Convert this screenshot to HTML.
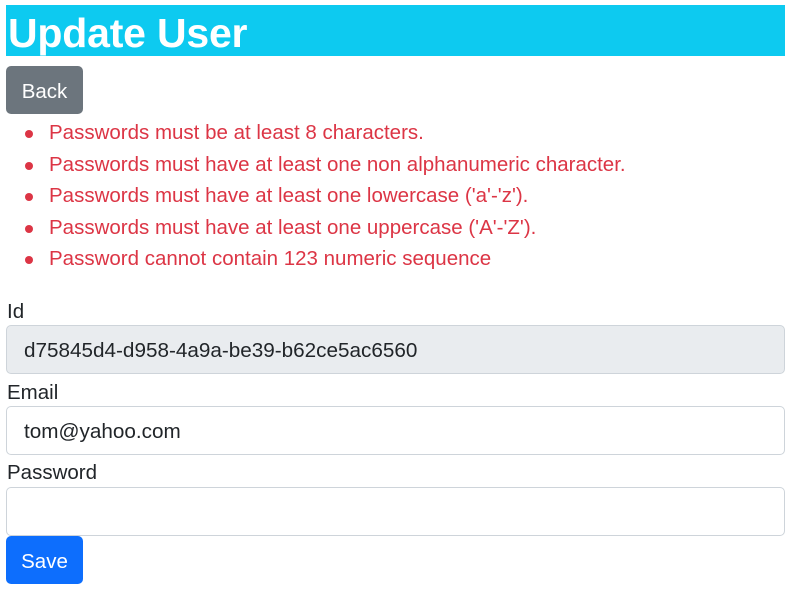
<!DOCTYPE html>
<html><head><style>
body{margin:0;background:#fff;font-family:"Liberation Sans",sans-serif;color:#212529;position:relative;width:790px;height:589px;overflow:hidden}
h1{position:absolute;left:6px;top:5px;width:779px;height:51px;margin:0;background:#0dcaf0;color:#fff;font-size:41px;font-weight:bold;line-height:56px;padding-left:2px;box-sizing:border-box;letter-spacing:-0.2px}
.btn{position:absolute;left:6px;width:77px;height:48px;border-radius:5px;color:#fff;font-size:20.5px;line-height:51px;text-align:center}
ul{position:absolute;left:0;top:117px;margin:0;padding-left:49px;color:#dc3545;font-size:20.5px;line-height:31.5px;list-style:none}
li{position:relative}
li:before{content:"";position:absolute;left:-24px;top:13px;width:8px;height:8px;border-radius:50%;background:#dc3545}
label{position:absolute;left:7px;font-size:20.5px}
.in{position:absolute;left:6px;width:779px;height:49px;box-sizing:border-box;border:1px solid #ced4da;border-radius:5px;font-size:20.7px;line-height:49px;padding-left:17px}
</style></head><body>
<h1>Update User</h1>
<div class="btn" style="top:66px;background:#6c757d">Back</div>
<ul>
<li>Passwords must be at least 8 characters.</li>
<li>Passwords must have at least one non alphanumeric character.</li>
<li>Passwords must have at least one lowercase ('a'-'z').</li>
<li>Passwords must have at least one uppercase ('A'-'Z').</li>
<li>Password cannot contain 123 numeric sequence</li>
</ul>
<label style="top:300px">Id</label>
<div class="in" style="top:325px;background:#e9ecef">d75845d4-d958-4a9a-be39-b62ce5ac6560</div>
<label style="top:381px">Email</label>
<div class="in" style="top:406px">tom@yahoo.com</div>
<label style="top:461px">Password</label>
<div class="in" style="top:487px"></div>
<div class="btn" style="top:536px;background:#0d6efd">Save</div>
</body></html>
